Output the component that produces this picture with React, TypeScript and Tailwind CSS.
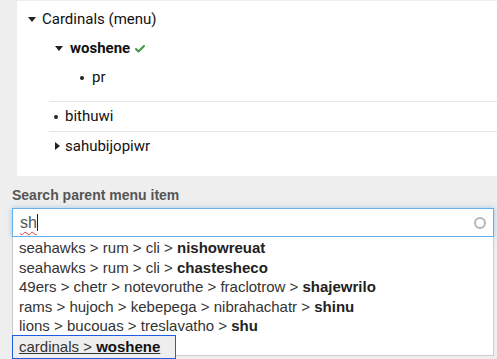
import { Check } from "lucide-react";

const results = [
  { path: "seahawks > rum > cli > ", leaf: "nishowreuat" },
  { path: "seahawks > rum > cli > ", leaf: "chastesheco" },
  { path: "49ers > chetr > notevoruthe > fraclotrow > ", leaf: "shajewrilo" },
  { path: "rams > hujoch > kebepega > nibrahachatr > ", leaf: "shinu" },
  { path: "lions > bucouas > treslavatho > ", leaf: "shu" },
];

const CaretDown = () => (
  <span className="inline-block w-0 h-0 border-l-[4px] border-r-[4px] border-t-[5px] border-l-transparent border-r-transparent border-t-[#222]" />
);

const CaretRight = () => (
  <span className="inline-block w-0 h-0 border-t-[4px] border-b-[4px] border-l-[5px] border-t-transparent border-b-transparent border-l-[#222]" />
);

const Bullet = () => <span className="inline-block w-[4px] h-[4px] rounded-full bg-[#222]" />;

export default function App() {
  return (
    <div className="w-full h-[359px] overflow-hidden bg-[#eeeeee] font-['Roboto',sans-serif] text-[#111]">
      {/* menu tree */}
      <div className="ml-[17px] mt-px h-[175px] bg-white pt-[4px] text-[15px]">
        <div className="flex items-center h-[29px] pl-[11px]">
          <span className="w-[14px] flex items-center"><CaretDown /></span>
          <span>Cardinals (menu)</span>
        </div>
        <div className="flex items-center h-[29px] pl-[38px]">
          <span className="w-[15px] flex items-center"><CaretDown /></span>
          <span className="font-bold">woshene</span>
          <Check className="ml-[4px] w-[12px] h-[12px] text-[#3c9a3c]" strokeWidth={4} />
        </div>
        <div className="flex items-center h-[29px] pl-[63px]">
          <span className="w-[12px] flex items-center"><Bullet /></span>
          <span>pr</span>
        </div>
        <div className="ml-[32px] mt-[9px] border-t border-[#e6e6e6]">
          <div className="flex items-center h-[29px] pl-[5px]">
            <span className="w-[11px] flex items-center"><Bullet /></span>
            <span>bithuwi</span>
          </div>
          <div className="border-t border-[#e6e6e6] flex items-center h-[29px] pl-[6px]">
            <span className="w-[10px] flex items-center"><CaretRight /></span>
            <span>sahubijopiwr</span>
          </div>
        </div>
      </div>

      {/* search */}
      <div className="relative pl-[12px] pr-[3px] pt-[9px] font-['Liberation_Sans',Arial,sans-serif]">
        <div className="text-[14px] font-bold text-[#555] leading-[20px]">Search parent menu item</div>
        <div className="mt-[3px] h-[29px] flex items-center border border-[#66afe9] shadow-[0_0_5px_rgba(102,175,233,0.6)] bg-white pl-[7px] pr-[7px]">
          <span className="text-[16px] text-[#555] underline decoration-wavy decoration-[#e53935] decoration-1 underline-offset-[3px]">sh</span>
          <span className="w-px h-[17px] bg-[#222]" />
          <span className="ml-auto w-[12px] h-[12px] rounded-full border-2 border-[#b5b5b5]" />
        </div>
        <div className="h-[119px] border border-t-0 border-[#cccccc] bg-white text-[15px] text-[#333] leading-[19.5px] pt-px">
          {results.map((r, i) => (
            <div key={i} className="pl-[6px] whitespace-nowrap">
              {r.path}
              <b className="text-[#222]">{r.leaf}</b>
            </div>
          ))}
          <div className="w-[164px] h-[24px] -ml-px mt-[-1px] flex items-center pl-[6px] border border-[#1f5de0] bg-[#eeeeee] underline whitespace-nowrap">
            cardinals &gt;&nbsp;<b className="text-[#111]">woshene</b>
          </div>
        </div>
      </div>
    </div>
  );
}
